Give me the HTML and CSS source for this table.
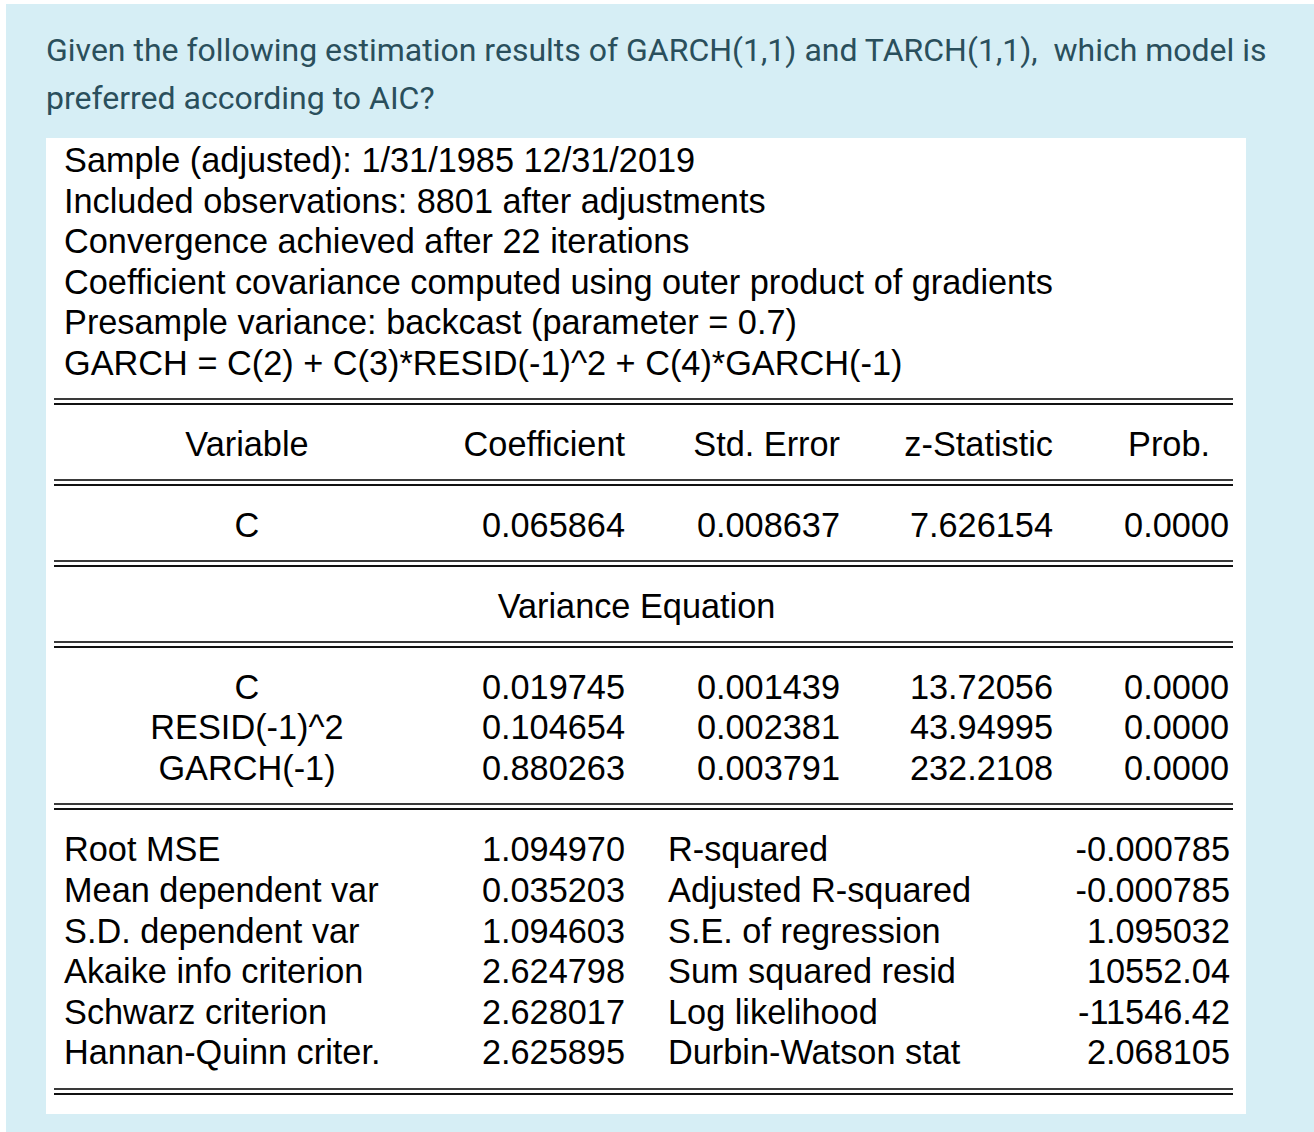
FILE: index.html
```html
<!DOCTYPE html>
<html>
<head>
<meta charset="utf-8">
<link rel="stylesheet" href="styles.css">
</head>
<body>
<div class="panel">
  <p class="question">Given the following estimation results of GARCH(1,1) and TARCH(1,1),&nbsp; which model is preferred according to AIC?</p>
  <div class="box">
    <div class="meta">
      <div>Sample (adjusted): 1/31/1985 12/31/2019</div>
      <div>Included observations: 8801 after adjustments</div>
      <div>Convergence achieved after 22 iterations</div>
      <div>Coefficient covariance computed using outer product of gradients</div>
      <div>Presample variance: backcast (parameter = 0.7)</div>
      <div>GARCH = C(2) + C(3)*RESID(-1)^2 + C(4)*GARCH(-1)</div>
    </div>
    <div class="rule"></div>
    <div class="grid head">
      <div class="c1">Variable</div>
      <div class="num">Coefficient</div>
      <div class="num">Std. Error</div>
      <div class="num">z-Statistic</div>
      <div class="num prob">Prob.</div>
    </div>
    <div class="rule"></div>
    <div class="grid one">
      <div class="c1">C</div>
      <div class="num">0.065864</div>
      <div class="num">0.008637</div>
      <div class="num">7.626154</div>
      <div class="num">0.0000</div>
    </div>
    <div class="rule"></div>
    <div class="vareq">Variance Equation</div>
    <div class="rule"></div>
    <div class="grid block">
      <div class="c1">C</div>
      <div class="num">0.019745</div>
      <div class="num">0.001439</div>
      <div class="num">13.72056</div>
      <div class="num">0.0000</div>
      <div class="c1">RESID(-1)^2</div>
      <div class="num">0.104654</div>
      <div class="num">0.002381</div>
      <div class="num">43.94995</div>
      <div class="num">0.0000</div>
      <div class="c1">GARCH(-1)</div>
      <div class="num">0.880263</div>
      <div class="num">0.003791</div>
      <div class="num">232.2108</div>
      <div class="num">0.0000</div>
    </div>
    <div class="rule"></div>
    <div class="stats">
      <div class="lab">Root MSE</div><div class="num">1.094970</div><div class="lab2">R-squared</div><div class="num">-0.000785</div>
      <div class="lab">Mean dependent var</div><div class="num">0.035203</div><div class="lab2">Adjusted R-squared</div><div class="num">-0.000785</div>
      <div class="lab">S.D. dependent var</div><div class="num">1.094603</div><div class="lab2">S.E. of regression</div><div class="num">1.095032</div>
      <div class="lab">Akaike info criterion</div><div class="num">2.624798</div><div class="lab2">Sum squared resid</div><div class="num">10552.04</div>
      <div class="lab">Schwarz criterion</div><div class="num">2.628017</div><div class="lab2">Log likelihood</div><div class="num">-11546.42</div>
      <div class="lab">Hannan-Quinn criter.</div><div class="num">2.625895</div><div class="lab2">Durbin-Watson stat</div><div class="num">2.068105</div>
    </div>
    <div class="rule"></div>
  </div>
</div>
</body>
</html>
```

FILE: styles.css
```css
html, body {
  margin: 0;
  padding: 0;
  background: #ffffff;
}
.panel {
  margin: 4px 0 0 6px;
  background: #d6eef5;
  padding: 22px 68px 17px 40px;
  min-height: 1128px;
  box-sizing: border-box;
}
.question {
  margin: 0;
  font-family: Roboto, "Liberation Sans", sans-serif;
  font-size: 32px;
  line-height: 48px;
  color: #2a4f5c;
  width: 1240px;
}
.box {
  margin-top: 16px;
  width: 1200px;
  box-sizing: border-box;
  background: #ffffff;
  padding: 2px 13px 19px 8px;
  font-family: "Liberation Sans", Arial, sans-serif;
  font-size: 34.3px;
  line-height: 40.6px;
  color: #000;
}
.meta {
  padding-left: 10px;
  padding-bottom: 14px;
  white-space: nowrap;
}
.rule {
  height: 3px;
  border-top: 2px solid #3a3a3a;
  border-bottom: 2px solid #111;
}
.grid {
  display: grid;
  grid-template-columns: 386px 185px 215px 213px 176px;
  white-space: nowrap;
}
.head, .one {
  align-items: center;
}
.head {
  padding-top: 5px;
  height: 69px;
}
.one {
  padding-top: 5px;
  height: 69px;
}
.block {
  padding: 19px 0 15px;
}
.c1 {
  text-align: center;
}
.num {
  text-align: right;
}
.prob {
  padding-right: 19px;
}
.vareq {
  height: 74px;
  line-height: 78px;
  text-align: center;
  padding-right: 14px;
}
.stats {
  display: grid;
  grid-template-columns: 386px 185px 1fr auto;
  padding: 19px 3px 15px 0;
  white-space: nowrap;
}
.stats .lab {
  padding-left: 10px;
}
.stats .lab2 {
  padding-left: 43px;
}
```
